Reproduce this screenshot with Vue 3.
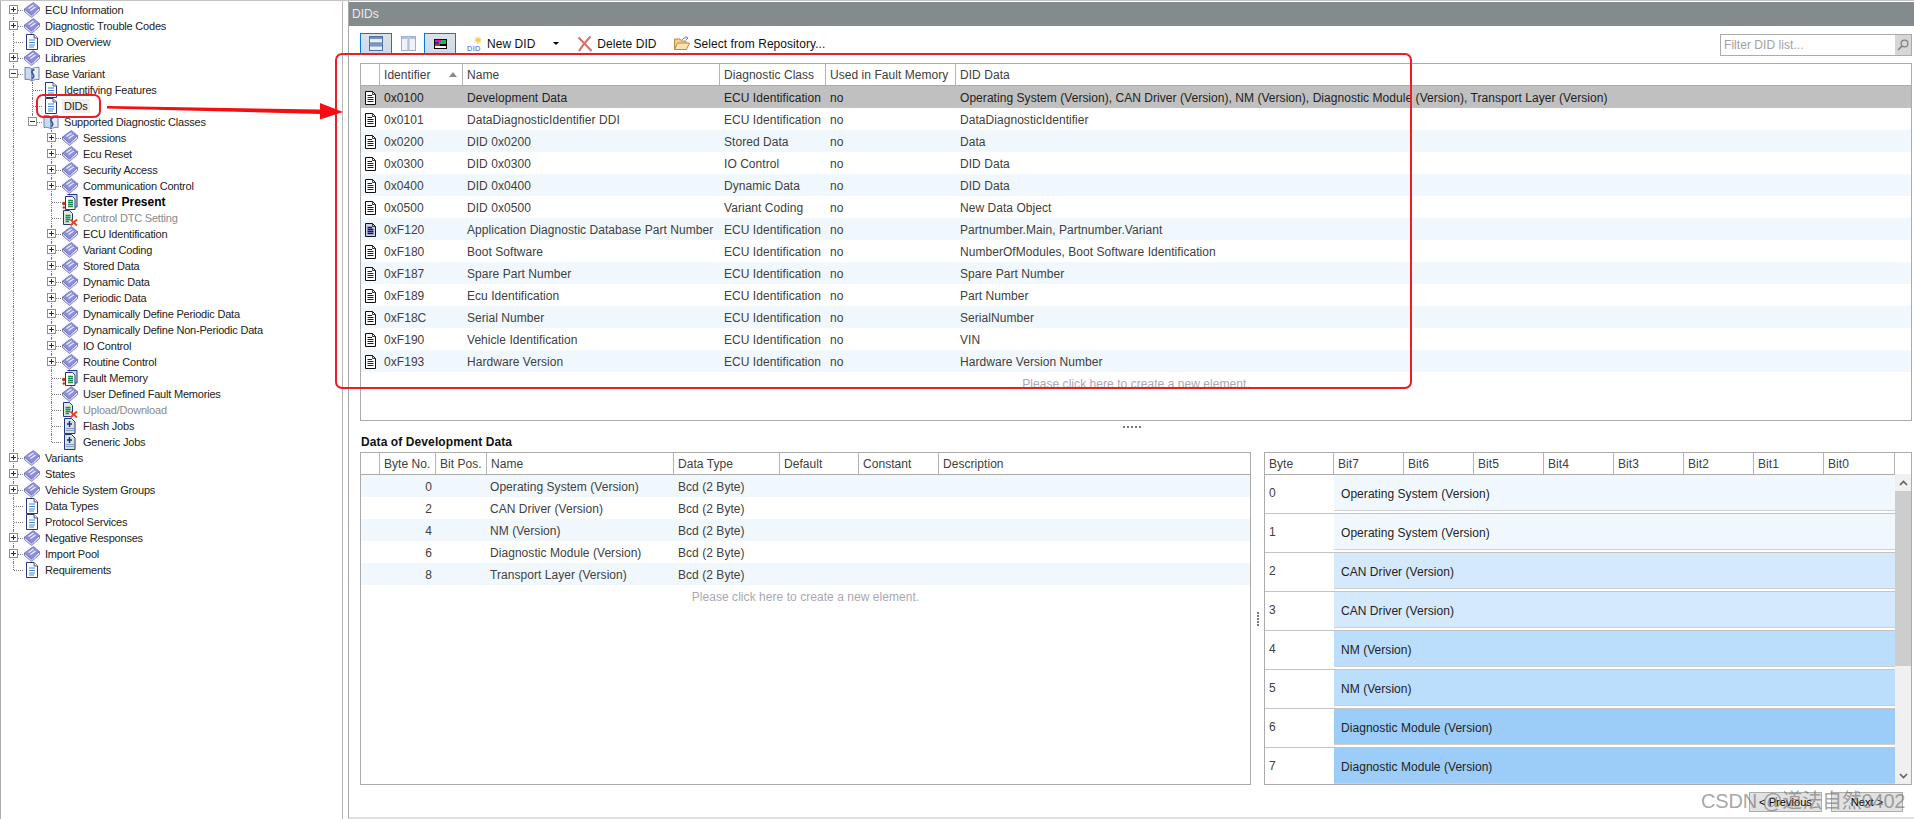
<script setup>
const treeRows = [
  { t: 'ECU Information', g: [], exp: '+', i: 'book', first: true },
  { t: 'Diagnostic Trouble Codes', g: [], exp: '+', i: 'book' },
  { t: 'DID Overview', g: [], i: 'doc' },
  { t: 'Libraries', g: [], exp: '+', i: 'book' },
  { t: 'Base Variant', g: [], exp: '-', i: 'open' },
  { t: 'Identifying Features', g: [1], i: 'doc' },
  { t: 'DIDs', g: [1], i: 'doc', hl: true },
  { t: 'Supported Diagnostic Classes', g: [1], exp: '-', i: 'open', last: true },
  { t: 'Sessions', g: [1, 0], exp: '+', i: 'book' },
  { t: 'Ecu Reset', g: [1, 0], exp: '+', i: 'book' },
  { t: 'Security Access', g: [1, 0], exp: '+', i: 'book' },
  { t: 'Communication Control', g: [1, 0], exp: '+', i: 'book' },
  { t: 'Tester Present', g: [1, 0], i: 'svc', bold: true },
  { t: 'Control DTC Setting', g: [1, 0], i: 'svcx', dim: true },
  { t: 'ECU Identification', g: [1, 0], exp: '+', i: 'book' },
  { t: 'Variant Coding', g: [1, 0], exp: '+', i: 'book' },
  { t: 'Stored Data', g: [1, 0], exp: '+', i: 'book' },
  { t: 'Dynamic Data', g: [1, 0], exp: '+', i: 'book' },
  { t: 'Periodic Data', g: [1, 0], exp: '+', i: 'book' },
  { t: 'Dynamically Define Periodic Data', g: [1, 0], exp: '+', i: 'book' },
  { t: 'Dynamically Define Non-Periodic Data', g: [1, 0], exp: '+', i: 'book' },
  { t: 'IO Control', g: [1, 0], exp: '+', i: 'book' },
  { t: 'Routine Control', g: [1, 0], exp: '+', i: 'book' },
  { t: 'Fault Memory', g: [1, 0], i: 'svc' },
  { t: 'User Defined Fault Memories', g: [1, 0], i: 'book' },
  { t: 'Upload/Download', g: [1, 0], i: 'svcx', dim: true },
  { t: 'Flash Jobs', g: [1, 0], i: 'job' },
  { t: 'Generic Jobs', g: [1, 0], i: 'job', last: true },
  { t: 'Variants', g: [], exp: '+', i: 'book' },
  { t: 'States', g: [], exp: '+', i: 'book' },
  { t: 'Vehicle System Groups', g: [], exp: '+', i: 'book' },
  { t: 'Data Types', g: [], i: 'doc' },
  { t: 'Protocol Services', g: [], i: 'doc' },
  { t: 'Negative Responses', g: [], exp: '+', i: 'book' },
  { t: 'Import Pool', g: [], exp: '+', i: 'book' },
  { t: 'Requirements', g: [], i: 'doc', last: true }
]

const didRows = [
  ['0x0100', 'Development Data', 'ECU Identification', 'no', 'Operating System (Version), CAN Driver (Version), NM (Version), Diagnostic Module (Version), Transport Layer (Version)'],
  ['0x0101', 'DataDiagnosticIdentifier DDI', 'ECU Identification', 'no', 'DataDiagnosticIdentifier'],
  ['0x0200', 'DID 0x0200', 'Stored Data', 'no', 'Data'],
  ['0x0300', 'DID 0x0300', 'IO Control', 'no', 'DID Data'],
  ['0x0400', 'DID 0x0400', 'Dynamic Data', 'no', 'DID Data'],
  ['0x0500', 'DID 0x0500', 'Variant Coding', 'no', 'New Data Object'],
  ['0xF120', 'Application Diagnostic Database Part Number', 'ECU Identification', 'no', 'Partnumber.Main, Partnumber.Variant'],
  ['0xF180', 'Boot Software', 'ECU Identification', 'no', 'NumberOfModules, Boot Software Identification'],
  ['0xF187', 'Spare Part Number', 'ECU Identification', 'no', 'Spare Part Number'],
  ['0xF189', 'Ecu Identification', 'ECU Identification', 'no', 'Part Number'],
  ['0xF18C', 'Serial Number', 'ECU Identification', 'no', 'SerialNumber'],
  ['0xF190', 'Vehicle Identification', 'ECU Identification', 'no', 'VIN'],
  ['0xF193', 'Hardware Version', 'ECU Identification', 'no', 'Hardware Version Number']
]

const dataRows = [
  [0, 'Operating System (Version)'],
  [2, 'CAN Driver (Version)'],
  [4, 'NM (Version)'],
  [6, 'Diagnostic Module (Version)'],
  [8, 'Transport Layer (Version)']
]

const bits = ['Bit7', 'Bit6', 'Bit5', 'Bit4', 'Bit3', 'Bit2', 'Bit1', 'Bit0']

const byteRows = [
  [0, 'Operating System (Version)', '#f0f8fe'],
  [1, 'Operating System (Version)', '#f0f8fe'],
  [2, 'CAN Driver (Version)', '#d5e9fd'],
  [3, 'CAN Driver (Version)', '#d5e9fd'],
  [4, 'NM (Version)', '#bbdefc'],
  [5, 'NM (Version)', '#bbdefc'],
  [6, 'Diagnostic Module (Version)', '#9ccdf9'],
  [7, 'Diagnostic Module (Version)', '#9ccdf9']
]
</script>

<template>
  <div class="root">
    <svg class="defs" width="0" height="0">
      <symbol id="book" viewBox="0 0 16 16">
        <path d="M.5 7V9.500L7.500 15.500 15.500 8.500V5.500L7.500 13Z" fill="#f4f4fc" stroke="#5f61ab" stroke-width=".8"/>
        <path d="M.5 7C3 5 7 2 9.500 .5L15.500 5.500C12 8 10 10.500 7.500 13Z" fill="#8e90d8" stroke="#6d6fb8" stroke-width=".7"/>
        <path d="M4.500 6.500 9.500 3M6.500 8.500 11.500 5" stroke="#eeeefc" stroke-width="1.300" fill="none"/>
        <path d="M1.500 9.500 7.500 14.500 14.500 8.500" stroke="#a9aade" stroke-width=".8" fill="none"/>
      </symbol>
      <symbol id="open" viewBox="0 0 16 16">
        <path d="M8 3C6 1.500 3.500 1 1 1.500V13.500C3.500 13 6 13.500 8 15Z" fill="#c9dbf0" stroke="#5d74ab" stroke-width=".9"/>
        <path d="M8 3C10 1.500 12.500 1 15 1.500V13.500C12.500 13 10 13.500 8 15Z" fill="#e6eff9" stroke="#5d74ab" stroke-width=".9"/>
        <path d="M10.500 4C8.500 3.500 7 5.500 8.500 7.500S10.500 11 8 12.500" fill="none" stroke="#3b5a98" stroke-width="1.700"/>
      </symbol>
      <symbol id="doc" viewBox="0 0 16 16">
        <path d="M2.500 .5H10L13.500 4V15.500H2.500Z" fill="#ffffff" stroke="#25357f"/>
        <path d="M10 .5V4H13.500" fill="#dce6f4" stroke="#25357f" stroke-width=".8"/>
        <path d="M5 6H11M5 8.500H11M5 11H11M5 13H10" stroke="#3f8ad2" stroke-width="1.100"/>
      </symbol>
      <symbol id="svc" viewBox="0 0 16 16">
        <path d="M5.500 .5H15V13H13" fill="#cfe0f2" stroke="#25357f"/>
        <path d="M3.500 2.500H10.500L13 5V15.500H3.500Z" fill="#ffffff" stroke="#25357f"/>
        <path d="M6 6.500H11M6 8.500H11M6 10.500H11M6 12.500H11" stroke="#1f8a50" stroke-width="1.300"/>
        <circle cx="1.800" cy="9.500" r="1.800" fill="#e02020"/>
        <circle cx="1.800" cy="13.500" r="1.200" fill="#e02020"/>
      </symbol>
      <symbol id="svcx" viewBox="0 0 16 16">
        <path d="M1.500 .5H7.500L10.500 3.500V14.500H1.500Z" fill="#dcebe0" stroke="#25357f"/>
        <path d="M3.500 5.500H8.500M3.500 7.500H8.500M3.500 9.500H8M3.500 11.500H7" stroke="#1f8a50" stroke-width="1.300"/>
        <path d="M8.500 9.500 15 15.500M15 9.500 8.500 15.500" stroke="#e8452c" stroke-width="1.900"/>
      </symbol>
      <symbol id="job" viewBox="0 0 16 16">
        <path d="M2.500 .5H9.500L13 4V15.500H2.500Z" fill="#d3e4e2" stroke="#25357f"/>
        <path d="M7.500 3V9M5 6H10" stroke="#1d2a70" stroke-width="1.400"/>
        <path d="M4.500 10.500H11.500M4.500 12.500H11.500" stroke="#32508a" stroke-width="1" stroke-dasharray="1 1"/>
      </symbol>
      <symbol id="rowdoc" viewBox="0 0 13 14">
        <path d="M1.500 .5H8.500L11.500 3.500V13.500H1.500Z" fill="#fff" stroke="#111"/>
        <path d="M8.500 .5V3.500H11.500" fill="none" stroke="#111" stroke-width=".8"/>
        <path d="M3.500 4.500H8M3.500 6.500H9.500M3.500 8.500H9.500M3.500 10.500H9.500" stroke="#10108a" stroke-width="1.200"/>
      </symbol>
      <symbol id="rowdoc2" viewBox="0 0 13 14">
        <path d="M1.500 .5H8.500L11.500 3.500V13.500H1.500Z" fill="#c9d0e8" stroke="#111"/>
        <path d="M8.500 .5V3.500H11.500" fill="none" stroke="#111" stroke-width=".8"/>
        <path d="M3.500 4.500H8M3.500 6.500H9.500M3.500 8.500H9.500M3.500 10.500H9.500" stroke="#101270" stroke-width="1.300"/>
      </symbol>
    </svg>

    <aside class="sidebar">
      <div v-for="r in treeRows" :key="r.t" class="tree-row">
        <span v-for="(g, n) in r.g" :key="n" class="guide" :class="{ 'guide-v': g }"></span>
        <span class="node" :class="{ 'node-last': r.last, 'node-first': r.first }">
          <span v-if="r.exp" class="expander">
            <svg width="9" height="9" viewBox="0 0 9 9">
              <rect x=".5" y=".5" width="8" height="8" fill="#fff" stroke="#8a8f98"/>
              <path d="M2 4.500H7" stroke="#20304f"/>
              <path v-if="r.exp === '+'" d="M4.500 2V7" stroke="#20304f"/>
            </svg>
          </span>
        </span>
        <svg class="tree-icon" width="16" height="16"><use :href="'#' + r.i"/></svg>
        <span class="tree-text" :class="{ bold: r.bold, dim: r.dim, hl: r.hl }">{{ r.t }}</span>
      </div>
    </aside>

    <main class="main">
      <div class="title">DIDs</div>

      <div class="toolbar">
        <span class="tb-btn on">
          <svg width="14" height="15" viewBox="0 0 14 15">
            <rect x=".5" y=".5" width="13" height="6.500" fill="#e8eef6" stroke="#4d6ea8"/>
            <rect x=".5" y="8" width="13" height="6.500" fill="#e8eef6" stroke="#4d6ea8"/>
            <rect x="1" y="1" width="12" height="2" fill="#6c8fc6"/>
            <rect x="1" y="8.500" width="12" height="2" fill="#6c8fc6"/>
          </svg>
        </span>
        <span class="tb-btn">
          <svg width="15" height="15" viewBox="0 0 15 15">
            <rect x=".5" y=".5" width="6.500" height="14" fill="#eef3f9" stroke="#9fb0c8"/>
            <rect x="8" y=".5" width="6.500" height="14" fill="#eef3f9" stroke="#9fb0c8"/>
            <rect x="1" y="1" width="5.500" height="2" fill="#b3c4dc"/>
            <rect x="8.500" y="1" width="5.500" height="2" fill="#b3c4dc"/>
          </svg>
        </span>
        <span class="tb-btn on">
          <svg width="13" height="10" viewBox="0 0 13 10">
            <rect width="13" height="10" fill="#000"/>
            <rect x="1" y="1" width="6" height="2" fill="#e8168c"/>
            <rect x="7" y="1" width="5" height="2" fill="#14c04a"/>
            <rect x="1" y="3" width="4" height="2" fill="#1a2ee0"/>
            <rect x="5" y="3" width="7" height="2" fill="#14c04a"/>
            <rect x="1" y="7" width="11" height="2" fill="#fff"/>
            <rect x="1" y="5" width="5" height="2" fill="#e81818"/>
          </svg>
        </span>
        <span class="tb-item first-item">
          <svg width="16" height="16" viewBox="0 0 16 16">
            <circle cx="11" cy="4" r="2.600" fill="#f6d36a"/>
            <path d="M11 0V8M7 4H15M8.200 1.200 13.800 6.800M13.800 1.200 8.200 6.800" stroke="#f4c95a" stroke-width=".7"/>
            <text x="0" y="15" class="did-mark">DID</text>
          </svg>
          New DID
        </span>
        <span class="caret"></span>
        <span class="tb-item delete-item">
          <svg width="16" height="16" viewBox="0 0 16 16">
            <path d="M1.500 1.500C5 5 10 10 14.500 15M13.500 .5C9 5 5 10 2 15" stroke="#d8706c" stroke-width="2.100" fill="none"/>
          </svg>
          Delete DID
        </span>
        <span class="tb-item repo-item">
          <svg width="16" height="15" viewBox="0 0 16 15">
            <path d="M.5 13.500V3H6L7.500 5H12V7" fill="#f0cf90" stroke="#b88c48"/>
            <path d="M.5 13.500 3.500 7H15.500L12.500 13.500Z" fill="#f8e3b0" stroke="#b88c48"/>
            <path d="M8 4C9 2 11 1.500 12.500 2M11.500 .5 14 2 12 3.800" fill="none" stroke="#5b86c0"/>
          </svg>
          Select from Repository...
        </span>
        <span class="filter">
          <span class="filter-text">Filter DID list...</span>
          <span class="filter-btn">
            <svg width="12" height="12" viewBox="0 0 12 12">
              <circle cx="7.500" cy="4.500" r="3.400" fill="none" stroke="#808080" stroke-width="1.200"/>
              <path d="M5 7 1 11" stroke="#808080" stroke-width="1.600"/>
            </svg>
          </span>
        </span>
      </div>

      <section class="did-table">
        <div class="grid-row did-cols head">
          <span class="hc"></span>
          <span class="hc sort">Identifier<i class="sort-arrow"></i></span>
          <span class="hc">Name</span>
          <span class="hc">Diagnostic Class</span>
          <span class="hc">Used in Fault Memory</span>
          <span class="hc end">DID Data</span>
        </div>
        <div
          v-for="(r, n) in didRows"
          :key="r[0]"
          class="grid-row did-cols body-row"
          :class="{ selected: n === 0, pale: n > 0 && n % 2 === 0 }"
        >
          <span class="rowicon">
            <svg width="13" height="14"><use :href="r[0] === '0xF120' ? '#rowdoc2' : '#rowdoc'"/></svg>
          </span>
          <span class="c">{{ r[0] }}</span>
          <span class="c">{{ r[1] }}</span>
          <span class="c">{{ r[2] }}</span>
          <span class="c">{{ r[3] }}</span>
          <span class="c">{{ r[4] }}</span>
        </div>
        <div class="hint">Please click here to create a new element.</div>
      </section>

      <div class="hsplit"><i></i><i></i><i></i><i></i><i></i></div>
      <div class="heading">Data of Development Data</div>

      <div class="lower">
        <section class="data-table">
          <div class="grid-row data-cols head">
            <span class="hc"></span>
            <span class="hc">Byte No.</span>
            <span class="hc">Bit Pos.</span>
            <span class="hc">Name</span>
            <span class="hc">Data Type</span>
            <span class="hc">Default</span>
            <span class="hc">Constant</span>
            <span class="hc end">Description</span>
          </div>
          <div
            v-for="(r, n) in dataRows"
            :key="r[0]"
            class="grid-row data-cols body-row"
            :class="{ pale: n % 2 === 0 }"
          >
            <span></span>
            <span class="c num">{{ r[0] }}</span>
            <span></span>
            <span class="c tight">{{ r[1] }}</span>
            <span class="c">Bcd (2 Byte)</span>
            <span></span>
            <span></span>
            <span></span>
          </div>
          <div class="hint">Please click here to create a new element.</div>
        </section>

        <div class="vsplit"><i></i><i></i><i></i><i></i><i></i></div>

        <section class="byte-table">
          <div class="byte-head">
            <span class="hc">Byte</span>
            <span v-for="b in bits" :key="b" class="hc">{{ b }}</span>
            <span></span>
          </div>
          <div class="byte-body">
            <div class="byte-rows">
              <div v-for="r in byteRows" :key="r[0]" class="byte-row">
                <span class="byte-no">{{ r[0] }}</span>
                <span class="byte-cell" :style="{ background: r[2] }">{{ r[1] }}</span>
              </div>
            </div>
            <div class="scrollbar">
              <span class="arrow">
                <svg width="9" height="6" viewBox="0 0 9 6"><path d="M1 5 4.500 1.500 8 5" fill="none" stroke="#606060" stroke-width="1.600"/></svg>
              </span>
              <span class="thumb"></span>
              <span class="track"></span>
              <span class="arrow">
                <svg width="9" height="6" viewBox="0 0 9 6"><path d="M1 1 4.500 4.500 8 1" fill="none" stroke="#606060" stroke-width="1.600"/></svg>
              </span>
            </div>
          </div>
        </section>
      </div>

      <div class="footer">
        <span class="btn btn-prev">&lt; Previous</span>
        <span class="btn btn-next">Next &gt;</span>
      </div>
    </main>

    <div class="mark-box"></div>
    <div class="mark-did"></div>
    <svg class="mark-arrow" width="240" height="24" viewBox="0 0 240 24">
      <path d="M1 6 214 9.500 214 3 237 12 214 19.500 214 14 1 8.500Z" fill="#f40e12"/>
    </svg>
    <div class="watermark">CSDN @道法自然0402</div>
  </div>
</template>

<style>
html, body { margin: 0; background: #fff; }
</style>

<style scoped>
.root {
  position: relative;
  display: flex;
  width: 1914px;
  height: 819px;
  overflow: hidden;
  background: #fff;
  font-family: "Liberation Sans", Arial, sans-serif;
  font-size: 12px;
  letter-spacing: .05px;
  color: #404040;
  box-sizing: border-box;
  border-top: 1px solid #c4c4c4;
}
.defs { position: absolute; }

/* Tree */
.sidebar {
  width: 343px;
  height: 100%;
  flex: none;
  box-sizing: border-box;
  padding-top: 1px;
  border-left: 1px solid #b0b0b0;
  border-right: 1px solid #b8b8b8;
  margin-right: 5px;
}
.tree-row {
  display: flex;
  align-items: center;
  height: 16px;
  padding-left: 3px;
  color: #222;
  white-space: nowrap;
}
.guide, .node {
  position: relative;
  flex: none;
  width: 19px;
  height: 16px;
}
.guide-v::before, .node::before {
  content: "";
  position: absolute;
  left: 9px;
  top: 0;
  bottom: 0;
  border-left: 1px dotted #7a7a7a;
}
.node::after {
  content: "";
  position: absolute;
  left: 10px;
  right: 0;
  top: 8px;
  border-top: 1px dotted #7a7a7a;
}
.node-last::before { bottom: 8px; }
.node-first::before { top: 8px; }
.expander {
  position: absolute;
  z-index: 1;
  left: 5px;
  top: 3px;
  width: 9px;
  height: 9px;
  display: flex;
}
.tree-icon { flex: none; margin-left: 1px; }
.tree-text { margin-left: 5px; font-size: 11px; letter-spacing: -.2px; }
.tree-text.bold { font-size: 12px; letter-spacing: 0; font-weight: 700; color: #000; }
.tree-text.dim { color: #8a8a8a; }
.tree-text.hl { background: #eeeeee; margin-left: 3px; padding: 1px 2px; }

/* Main */
.main {
  flex: 1;
  min-width: 0;
  display: flex;
  flex-direction: column;
  border-left: 1px solid #a8a8a8;
  border-bottom: 2px solid #e0e0e0;
  padding-top: 1px;
  box-sizing: border-box;
}
.title {
  height: 24px;
  flex: none;
  line-height: 24px;
  padding-left: 3px;
  background: #838b8c;
  color: #e8ecec;
}
.toolbar {
  height: 37px;
  flex: none;
  display: flex;
  align-items: center;
  box-sizing: border-box;
  padding: 0 2px 2px 11px;
  color: #111;
}
.tb-btn {
  width: 32px;
  height: 21px;
  box-sizing: border-box;
  display: flex;
  align-items: center;
  justify-content: center;
}
.tb-btn.on {
  border: 1px solid #0a7ad6;
  background: linear-gradient(#dbe2e9, #cfdbe6);
}
.tb-item { display: flex; align-items: center; gap: 4px; }
.first-item { margin-left: 11px; }
.did-mark {
  font-family: "Liberation Sans", Arial, sans-serif;
  font-size: 7.5px;
  fill: #3f52e8;
  letter-spacing: .3px;
}
.caret {
  width: 0;
  height: 0;
  margin-left: 18px;
  border: 3px solid transparent;
  border-top: 3px solid #000;
  border-bottom: 0;
}
.delete-item { margin-left: 18px; }
.repo-item { margin-left: 17px; }
.filter {
  margin-left: auto;
  width: 192px;
  height: 22px;
  box-sizing: border-box;
  border: 1px solid #ababab;
  background: #fff;
  display: flex;
  justify-content: space-between;
  margin-top: 2px;
}
.filter-text { padding-left: 3px; line-height: 20px; color: #a2a0aa; }
.filter-btn {
  width: 16px;
  background: #d6d6d6;
  display: flex;
  align-items: center;
  justify-content: center;
}

/* Tables */
.did-table {
  height: 358px;
  flex: none;
  margin: 0 2px 0 11px;
  box-sizing: border-box;
  border: 1px solid #ababab;
}
.grid-row { display: grid; }
.did-cols { grid-template-columns: 19px 83px 257px 106px 130px 1fr; }
.data-cols { grid-template-columns: 19px 56px 51px 187px 106px 79px 80px 1fr; }
.head {
  height: 22px;
  box-sizing: border-box;
  border-bottom: 1px solid #ababab;
  background: #fff;
}
.hc {
  box-sizing: border-box;
  padding-left: 4px;
  line-height: 22px;
  border-right: 1px solid #b4b4b4;
  white-space: nowrap;
  overflow: hidden;
}
.hc.end { border-right: 0; }
.sort { display: flex; justify-content: space-between; align-items: center; padding-right: 5px; }
.sort-arrow {
  width: 0;
  height: 0;
  border: 4px solid transparent;
  border-bottom: 5px solid #8a8a8a;
  border-top: 0;
}
.body-row { height: 22px; line-height: 24px; white-space: nowrap; }
.body-row.pale { background: #f1f8fd; }
.body-row.selected { background: #c0c0c0; color: #222; }
.c { padding-left: 4px; overflow: visible; }
.c.tight { padding-left: 3px; }
.rowicon { display: flex; align-items: center; justify-content: flex-start; padding-left: 3px; }
.num { text-align: right; padding: 0 4px 0 0; }
.hint {
  text-align: center;
  color: #aaa8b2;
  line-height: 22px;
  margin-top: 1px;
}

.hsplit {
  height: 12px;
  flex: none;
  display: flex;
  align-items: center;
  justify-content: center;
  gap: 2px;
}
.hsplit i { width: 2px; height: 2px; background: #777; }
.heading {
  height: 19px;
  flex: none;
  padding-left: 12px;
  font-weight: 700;
  color: #111;
  line-height: 18px;
  letter-spacing: .1px;
}
.lower {
  height: 333px;
  flex: none;
  display: flex;
  margin: 0 2px 0 11px;
}
.data-table {
  width: 891px;
  flex: none;
  box-sizing: border-box;
  border: 1px solid #ababab;
}
.vsplit {
  width: 13px;
  flex: none;
  display: flex;
  flex-direction: column;
  align-items: center;
  justify-content: center;
  gap: 1px;
}
.vsplit i { width: 2px; height: 2px; background: #777; }
.byte-table {
  flex: 1;
  min-width: 0;
  box-sizing: border-box;
  border: 1px solid #ababab;
  display: flex;
  flex-direction: column;
  overflow: hidden;
}
.byte-head {
  height: 21px;
  flex: none;
  display: grid;
  grid-template-columns: 69px repeat(7, 70px) 71px 1fr;
}
.byte-body { flex: 1; min-height: 0; display: flex; }
.byte-rows { flex: 1; min-width: 0; overflow: hidden; }
.byte-row {
  height: 39px;
  box-sizing: border-box;
  display: grid;
  grid-template-columns: 69px 1fr;
  border-top: 1px solid #c4c4c4;
  border-bottom: 2px solid #fff;
  color: #222;
}
.byte-row:first-child { border-top-color: #ababab; }
.byte-no { padding-left: 4px; line-height: 36px; color: #404040; }
.byte-cell {
  padding-left: 7px;
  line-height: 38px;
  border-bottom: 1px solid #cfcfcf;
  height: 36px;
  box-sizing: border-box;
}
.scrollbar {
  width: 16px;
  flex: none;
  display: flex;
  flex-direction: column;
  background: #f0f0f0;
}
.arrow {
  height: 17px;
  flex: none;
  display: flex;
  align-items: center;
  justify-content: center;
}
.thumb { height: 175px; flex: none; background: #cdcdcd; }
.track { flex: 1; }

.footer {
  height: 31px;
  flex: none;
  display: flex;
  justify-content: flex-end;
  align-items: flex-start;
  padding: 7px 11px 0 0;
  box-sizing: border-box;
}
.btn {
  height: 20px;
  box-sizing: border-box;
  border: 1px solid #adadad;
  background: #e1e1e1;
  color: #000;
  line-height: 18px;
  text-align: center;
  font-size: 11px;
}
.btn-prev { width: 73px; margin-right: 9px; }
.btn-next { width: 72px; }

/* Annotations */
.mark-box {
  position: absolute;
  left: 335px;
  top: 52px;
  width: 1077px;
  height: 336px;
  box-sizing: border-box;
  border: 2px solid #ee1c25;
  border-radius: 7px;
  pointer-events: none;
}
.mark-did {
  position: absolute;
  left: 36px;
  top: 93px;
  width: 65px;
  height: 24px;
  box-sizing: border-box;
  border: 2px solid #ee1c25;
  border-radius: 7px;
  pointer-events: none;
}
.mark-arrow {
  position: absolute;
  left: 106px;
  top: 99px;
  pointer-events: none;
}
.watermark {
  position: absolute;
  left: 1701px;
  top: 786px;
  font-family: "Liberation Sans", "Noto Sans CJK SC", sans-serif;
  font-size: 20px;
  line-height: 28px;
  letter-spacing: -.2px;
  color: rgba(110, 110, 110, .62);
  white-space: nowrap;
  pointer-events: none;
}
</style>
